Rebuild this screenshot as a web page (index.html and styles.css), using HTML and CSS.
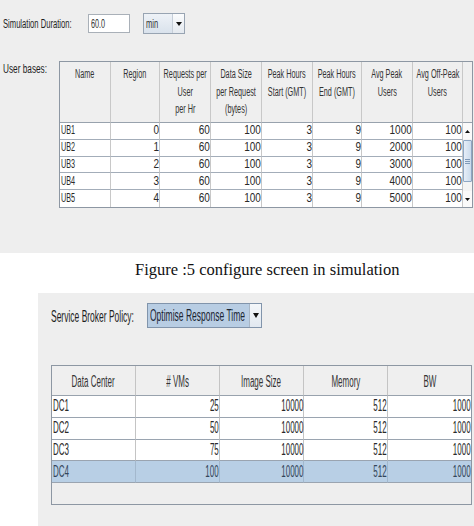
FILE: index.html
```html
<!DOCTYPE html>
<html>
<head>
<meta charset="utf-8">
<link rel="stylesheet" href="styles.css">
</head>
<body>
<div class="panel1">
  <div class="row1">
    <div class="lbl1"><span class="q">Simulation Duration:</span></div>
    <div class="field"><span class="q">60.0</span></div>
    <div class="combo-s">
      <div class="val"><span class="q">min</span></div>
      <div class="btn"><svg width="6" height="4" viewBox="0 0 6 4"><path d="M0 0H6L3 4Z" fill="#111"/></svg></div>
    </div>
  </div>
  <div class="row2">
    <div class="lbl2"><span class="q">User bases:</span></div>
    <table class="ub">
      <colgroup>
        <col class="c51"><col class="c49"><col class="c51"><col class="c51"><col class="c51"><col class="c49"><col class="c51"><col class="c50"><col class="c9">
      </colgroup>
      <thead>
        <tr>
          <th><div class="h"><span class="q">Name</span></div></th>
          <th><div class="h"><span class="q">Region</span></div></th>
          <th><div class="h"><span class="q">Requests per</span><span class="q">User</span><span class="q">per Hr</span></div></th>
          <th><div class="h"><span class="q">Data Size</span><span class="q">per Request</span><span class="q">(bytes)</span></div></th>
          <th><div class="h"><span class="q">Peak Hours</span><span class="q">Start (GMT)</span></div></th>
          <th><div class="h"><span class="q">Peak Hours</span><span class="q">End (GMT)</span></div></th>
          <th><div class="h"><span class="q">Avg Peak</span><span class="q">Users</span></div></th>
          <th><div class="h"><span class="q">Avg Off-Peak</span><span class="q">Users</span></div></th>
          <th class="corner"></th>
        </tr>
      </thead>
      <tbody>
        <tr>
          <td><span class="q">UB1</span></td><td class="num"><span class="q">0</span></td><td class="num"><span class="q">60</span></td><td class="num"><span class="q">100</span></td><td class="num"><span class="q">3</span></td><td class="num"><span class="q">9</span></td><td class="num"><span class="q">1000</span></td><td class="num"><span class="q">100</span></td>
          <td class="sbcell" rowspan="5">
            <div class="sb">
              <div class="arr"><svg width="5" height="3" viewBox="0 0 5 3"><path d="M0 3H5L2.5 0Z" fill="#111"/></svg></div>
              <div class="track"><div class="thumb"><div class="grip"></div></div></div>
              <div class="arr"><svg width="5" height="3" viewBox="0 0 5 3"><path d="M0 0H5L2.5 3Z" fill="#111"/></svg></div>
            </div>
          </td>
        </tr>
        <tr>
          <td><span class="q">UB2</span></td><td class="num"><span class="q">1</span></td><td class="num"><span class="q">60</span></td><td class="num"><span class="q">100</span></td><td class="num"><span class="q">3</span></td><td class="num"><span class="q">9</span></td><td class="num"><span class="q">2000</span></td><td class="num"><span class="q">100</span></td>
        </tr>
        <tr>
          <td><span class="q">UB3</span></td><td class="num"><span class="q">2</span></td><td class="num"><span class="q">60</span></td><td class="num"><span class="q">100</span></td><td class="num"><span class="q">3</span></td><td class="num"><span class="q">9</span></td><td class="num"><span class="q">3000</span></td><td class="num"><span class="q">100</span></td>
        </tr>
        <tr>
          <td><span class="q">UB4</span></td><td class="num"><span class="q">3</span></td><td class="num"><span class="q">60</span></td><td class="num"><span class="q">100</span></td><td class="num"><span class="q">3</span></td><td class="num"><span class="q">9</span></td><td class="num"><span class="q">4000</span></td><td class="num"><span class="q">100</span></td>
        </tr>
        <tr class="last">
          <td><span class="q">UB5</span></td><td class="num"><span class="q">4</span></td><td class="num"><span class="q">60</span></td><td class="num"><span class="q">100</span></td><td class="num"><span class="q">3</span></td><td class="num"><span class="q">9</span></td><td class="num"><span class="q">5000</span></td><td class="num"><span class="q">100</span></td>
        </tr>
      </tbody>
    </table>
  </div>
</div>
<div class="caption">Figure :5 configure screen in simulation</div>
<div class="panel2">
  <div class="row3">
    <div class="lbl3"><span class="q">Service Broker Policy:</span></div>
    <div class="combo-b">
      <div class="val"><span class="q">Optimise Response Time</span></div>
      <div class="btn"><svg width="6" height="5" viewBox="0 0 6 5"><path d="M0 0H6L3 5Z" fill="#111"/></svg></div>
    </div>
  </div>
  <div class="vp">
    <table class="dc">
      <colgroup>
        <col class="d84"><col class="d84"><col class="d84"><col class="d84"><col class="d83">
      </colgroup>
      <thead>
        <tr>
          <th><div class="h2"><span class="q">Data Center</span></div></th>
          <th><div class="h2"><span class="q"># VMs</span></div></th>
          <th><div class="h2"><span class="q">Image Size</span></div></th>
          <th><div class="h2"><span class="q">Memory</span></div></th>
          <th><div class="h2"><span class="q">BW</span></div></th>
        </tr>
      </thead>
      <tbody>
        <tr><td><span class="q">DC1</span></td><td class="num"><span class="q">25</span></td><td class="num"><span class="q">10000</span></td><td class="num"><span class="q">512</span></td><td class="num"><span class="q">1000</span></td></tr>
        <tr><td><span class="q">DC2</span></td><td class="num"><span class="q">50</span></td><td class="num"><span class="q">10000</span></td><td class="num"><span class="q">512</span></td><td class="num"><span class="q">1000</span></td></tr>
        <tr><td><span class="q">DC3</span></td><td class="num"><span class="q">75</span></td><td class="num"><span class="q">10000</span></td><td class="num"><span class="q">512</span></td><td class="num"><span class="q">1000</span></td></tr>
        <tr class="sel"><td><span class="q">DC4</span></td><td class="num"><span class="q">100</span></td><td class="num"><span class="q">10000</span></td><td class="num"><span class="q">512</span></td><td class="num"><span class="q">1000</span></td></tr>
      </tbody>
    </table>
  </div>
</div>
</body>
</html>
```
FILE: styles.css
```css
* { box-sizing: border-box; }
html, body { margin: 0; padding: 0; background: #ffffff; }
body {
  width: 474px;
  height: 526px;
  overflow: hidden;
  font-family: "Liberation Sans", Arial, sans-serif;
  color: #1e1e1e;
}

/* condensed text (the screenshot is horizontally squeezed) */
.q {
  display: inline-block;
  white-space: nowrap;
  transform: scaleX(var(--sx, 0.6));
  transform-origin: left center;
}

/* ---------- panel 1 ---------- */
.panel1 {
  background: #eeeeee;
  height: 253px;
  padding: 13px 0 0 3px;
}
.row1 {
  display: flex;
  align-items: center;
  height: 21px;
  font-size: 12.5px;
}
.lbl1 { flex: none; width: 85px; --sx: 0.61; }
.field {
  flex: none;
  width: 42px;
  height: 19px;
  background: #fff;
  border: 1px solid #a9b0b8;
  padding-left: 2px;
  display: flex;
  align-items: center;
  --sx: 0.58;
  color: #333;
}
.combo-s {
  flex: none;
  margin-left: 13px;
  width: 42px;
  height: 21px;
  border: 1px solid #98a4b2;
  display: flex;
}
.combo-s .val {
  flex: 1;
  min-width: 0;
  background: linear-gradient(#eef2f7, #d9e2ec);
  display: flex;
  align-items: center;
  padding-left: 2px;
  --sx: 0.6;
  color: #333;
}
.combo-s .btn {
  flex: none;
  width: 12px;
  background: linear-gradient(#fbfcfd, #e4e9ef);
  border-left: 1px solid #c6ced8;
  display: flex;
  align-items: center;
  justify-content: center;
}

.row2 {
  display: flex;
  align-items: flex-start;
  margin-top: 27px;
}
.lbl2 {
  flex: none;
  width: 56px;
  padding-top: 1px;
  font-size: 12.5px;
  --sx: 0.66;
}

/* user base table */
.ub {
  flex: none;
  border-collapse: separate;
  border-spacing: 0;
  table-layout: fixed;
  width: 414px;
  border: 1px solid #8d97a3;
  font-size: 12.5px;
  background: #fff;
}
.c51 { width: 51px; }
.c49 { width: 49px; }
.c50 { width: 50px; }
.c9 { width: 9px; }
.ub thead tr { height: 61px; }
.ub th {
  padding: 0;
  vertical-align: top;
  font-weight: normal;
  background: #efefef;
  border-right: 1px solid #c8c8c8;
  border-bottom: 1px solid #98a2ad;
  color: #333;
}
.ub th.corner { border-right: 0; }
.h {
  display: flex;
  flex-direction: column;
  align-items: center;
  padding-top: 4px;
  line-height: 17.5px;
  --sx: 0.58;
}
.h .q, .h2 .q { transform-origin: center center; }
.ub tbody tr { height: 16.8px; }
.ub td {
  padding: 0 1px;
  line-height: 15px;
  border-right: 1px solid #c8c8c8;
  border-bottom: 1px solid #a3adb9;
  white-space: nowrap;
  color: #2a2a2a;
  --sx: 0.58;
}
.ub tr.last td { border-bottom: 0; }
.ub td.num { text-align: right; --sx: 0.8; padding-right: 0; }
.num .q { transform-origin: right center; }
.ub td.sbcell {
  padding: 0;
  border: 0;
  vertical-align: top;
  background: #f4f4f4;
  height: 84px;
}
.sb {
  display: flex;
  flex-direction: column;
  height: 84px;
}
.arr {
  height: 16px;
  display: flex;
  align-items: center;
  justify-content: center;
  background: #fafafa;
}
.track {
  flex: 1;
  padding: 1px 0 0 0;
}
.thumb {
  height: 42px;
  background: linear-gradient(90deg, #e6eef8, #cbdbec);
  border: 1px solid #8ea7c4;
  border-radius: 1px;
  display: flex;
  align-items: center;
  justify-content: center;
}
.grip {
  width: 5px;
  height: 5px;
  background: repeating-linear-gradient(#7e99b8 0 1px, transparent 1px 2px);
}

/* ---------- caption ---------- */
.caption {
  height: 40px;
  padding: 7px 0 0 135px;
  font-family: "Liberation Serif", "Times New Roman", serif;
  font-size: 16.5px;
  line-height: 20px;
  color: #111;
  white-space: nowrap;
}

/* ---------- panel 2 ---------- */
.panel2 {
  margin-left: 38px;
  height: 233px;
  background: #eeeeee;
  padding: 10px 0 0 13px;
}
.row3 {
  display: flex;
  align-items: center;
  height: 25px;
}
.lbl3 {
  flex: none;
  width: 96px;
  font-size: 16px;
  padding-top: 3px;
  --sx: 0.53;
}
.combo-b {
  flex: none;
  width: 115px;
  height: 25px;
  border: 1px solid #8194ab;
  display: flex;
}
.combo-b .val {
  flex: 1;
  min-width: 0;
  background: #b8cde3;
  display: flex;
  align-items: center;
  padding-left: 2px;
  font-size: 17px;
  color: #1c2633;
  --sx: 0.5;
}
.combo-b .btn {
  flex: none;
  width: 12px;
  background: linear-gradient(#f4f7fa, #e1e8f0);
  border-left: 1px solid #a8b6c6;
  display: flex;
  align-items: center;
  justify-content: center;
}

.vp {
  margin-top: 37px;
  width: 421px;
  height: 140px;
  border: 1px solid #8d97a3;
  background: #eeeeee;
}
.dc {
  border-collapse: separate;
  border-spacing: 0;
  table-layout: fixed;
  width: 419px;
  font-size: 16px;
}
.d84 { width: 84px; }
.d83 { width: 83px; }
.dc thead tr { height: 30px; }
.dc th {
  padding: 0;
  font-weight: normal;
  background: #efefef;
  border-right: 1px solid #c4c4c4;
  border-bottom: 1px solid #98a2ad;
  color: #333;
}
.dc th:last-child, .dc td:last-child { border-right: 0; }
.h2 {
  display: flex;
  justify-content: center;
  padding-top: 3px;
  --sx: 0.5;
}
.dc tbody tr { height: 21.75px; }
.dc td {
  padding: 0 1px;
  background: #fff;
  border-right: 1px solid #c4c4c4;
  border-bottom: 1px solid #9aa4b0;
  color: #2a2a2a;
  white-space: nowrap;
  line-height: 18px;
  --sx: 0.5;
}
.dc td.num { text-align: right; padding-right: 0; }
.dc tr.sel td {
  background: #b8cfe5;
  color: #34465a;
  border-right-color: #a3b8cd;
}
```
